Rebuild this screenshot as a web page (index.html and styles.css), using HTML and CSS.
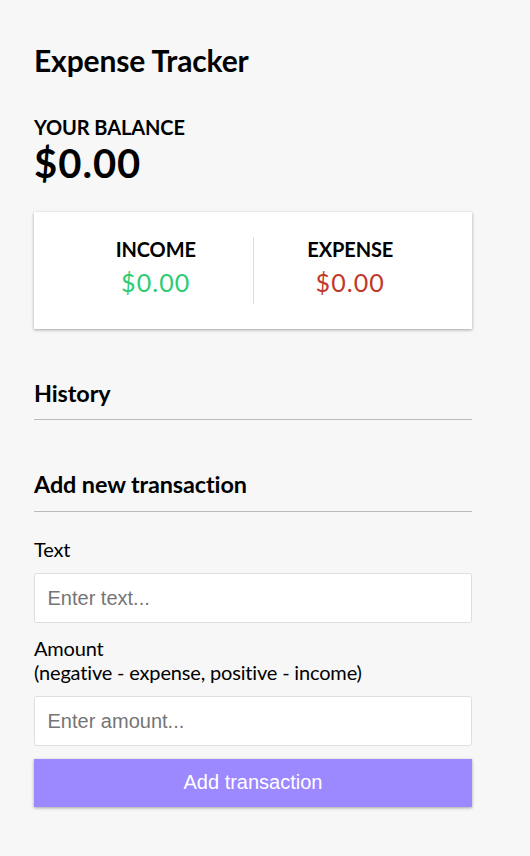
FILE: index.html
```html
<!DOCTYPE html>
<html lang="en">
<head>
  <meta charset="UTF-8" />
  <meta name="viewport" content="width=device-width, initial-scale=1.0" />
  <title>Expense Tracker</title>
  <link rel="stylesheet" href="styles.css">
</head>
<body>
  <h2 class="title">Expense Tracker</h2>

  <div class="container">
    <h4>Your Balance</h4>
    <h1 id="balance">$0.00</h1>

    <div class="inc-exp-container">
      <div>
        <h4>Income</h4>
        <p id="money-plus" class="money plus">$0.00</p>
      </div>
      <div>
        <h4>Expense</h4>
        <p id="money-minus" class="money minus">$0.00</p>
      </div>
    </div>

    <h3>History</h3>
    <ul id="list" class="list"></ul>

    <h3>Add new transaction</h3>
    <form id="form">
      <div class="form-control">
        <label for="text">Text</label>
        <input type="text" id="text" placeholder="Enter text..." />
      </div>
      <div class="form-control">
        <label for="amount">Amount <br />
          (negative - expense, positive - income)</label>
        <input type="number" id="amount" placeholder="Enter amount..." />
      </div>
      <button class="btn">Add transaction</button>
    </form>
  </div>
</body>
</html>
```

FILE: styles.css
```css
:root {
  --box-shadow: 0 1.25px 3.75px rgba(0, 0, 0, 0.12), 0 1.25px 2.5px rgba(0, 0, 0, 0.24);
}

* { box-sizing: border-box; }

body {
  background-color: #f7f7f7;
  margin: 0;
  padding: 42px 0 0 34px;
  font-family: Lato, "Open Sans", sans-serif;
  color: #000;
}

.title { font-size: 30px; letter-spacing: -0.13px; margin: 0; width: 438px; }

.container { width: 438px; margin: 0; padding-top: 37px; }

h1 { font-size: 40px; letter-spacing: 1px; margin: 0; }

h3 {
  font-size: 23.4px;
  letter-spacing: -0.1px;
  border-bottom: 1px solid #bbb;
  padding-bottom: 12.5px;
  margin: 50px 0 12.5px;
}

h4 { font-size: 20px; letter-spacing: -0.1px; margin: 0; text-transform: uppercase; }

.inc-exp-container {
  background-color: #fff;
  box-shadow: var(--box-shadow);
  padding: 25px;
  display: flex;
  justify-content: space-between;
  margin: 25px 0;
}

.inc-exp-container > div { flex: 1; text-align: center; }
.inc-exp-container > div:first-of-type { border-right: 1px solid #dedede; }

.money { font-size: 25px; letter-spacing: 1.1px; margin: 6.25px 0; }
.money.plus { color: #2ecc71; }
.money.minus { color: #c0392b; }

.list { list-style-type: none; padding: 0; margin: 20px 0 50px; }

label { display: inline-block; margin: 12.5px 0; font-size: 20px; letter-spacing: -0.17px; }

input[type='text'],
input[type='number'] {
  border: 1px solid #dedede;
  border-radius: 2.5px;
  display: block;
  font-family: "Liberation Sans", Arial, sans-serif;
  font-size: 20px;
  padding: 12.5px;
  width: 100%;
  margin: 0;
}

input::placeholder { color: #757575; }

.btn {
  cursor: pointer;
  background-color: #9c88ff;
  box-shadow: var(--box-shadow);
  color: #fff;
  border: 0;
  display: block;
  font-family: "Liberation Sans", Arial, sans-serif;
  font-size: 20px;
  margin: 12.5px 0 37.5px;
  padding: 12.5px;
  width: 100%;
}
```
